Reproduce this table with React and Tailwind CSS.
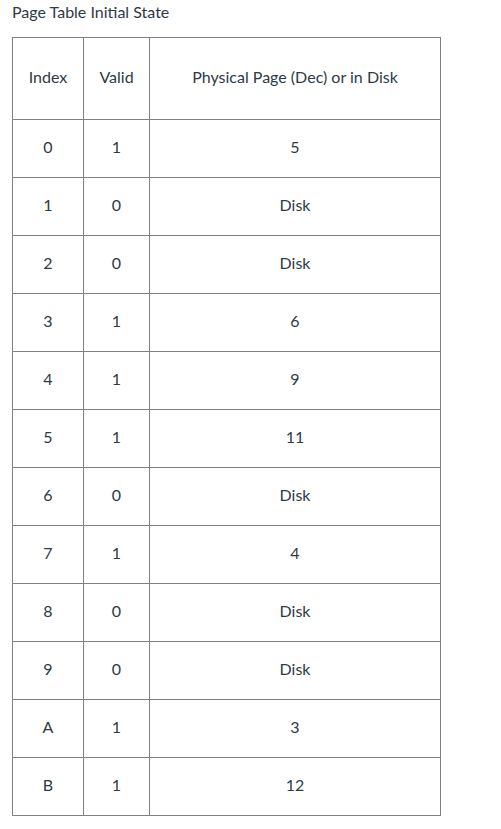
export default function App() {
  const rows = [
    ["0", "1", "5"],
    ["1", "0", "Disk"],
    ["2", "0", "Disk"],
    ["3", "1", "6"],
    ["4", "1", "9"],
    ["5", "1", "11"],
    ["6", "0", "Disk"],
    ["7", "1", "4"],
    ["8", "0", "Disk"],
    ["9", "0", "Disk"],
    ["A", "1", "3"],
    ["B", "1", "12"],
  ];
  return (
    <div className="bg-white min-h-[829px] w-[501px] text-[#2d3b45] text-[16px]" style={{ fontFamily: "Lato, 'Liberation Sans', sans-serif" }}>
      <div className="pl-[12px] pt-[1px] leading-[22px] h-[37px]">Page Table Initial State</div>
      <table className="ml-[12px] border-collapse table-fixed w-[428px]">
        <colgroup>
          <col className="w-[71px]" />
          <col className="w-[66px]" />
          <col className="w-[291px]" />
        </colgroup>
        <thead>
          <tr className="h-[82px]">
            <th className="border border-[#808080] font-normal text-center p-0 pb-[3px]">Index</th>
            <th className="border border-[#808080] font-normal text-center p-0 pb-[3px]">Valid</th>
            <th className="border border-[#808080] font-normal text-center p-0 pb-[3px]">Physical Page (Dec) or in Disk</th>
          </tr>
        </thead>
        <tbody>
          {rows.map((r, i) => (
            <tr key={i} className="h-[58px]">
              {r.map((c, j) => (
                <td key={j} className="border border-[#808080] text-center p-0 pb-[3px]">{c}</td>
              ))}
            </tr>
          ))}
        </tbody>
      </table>
    </div>
  );
}
